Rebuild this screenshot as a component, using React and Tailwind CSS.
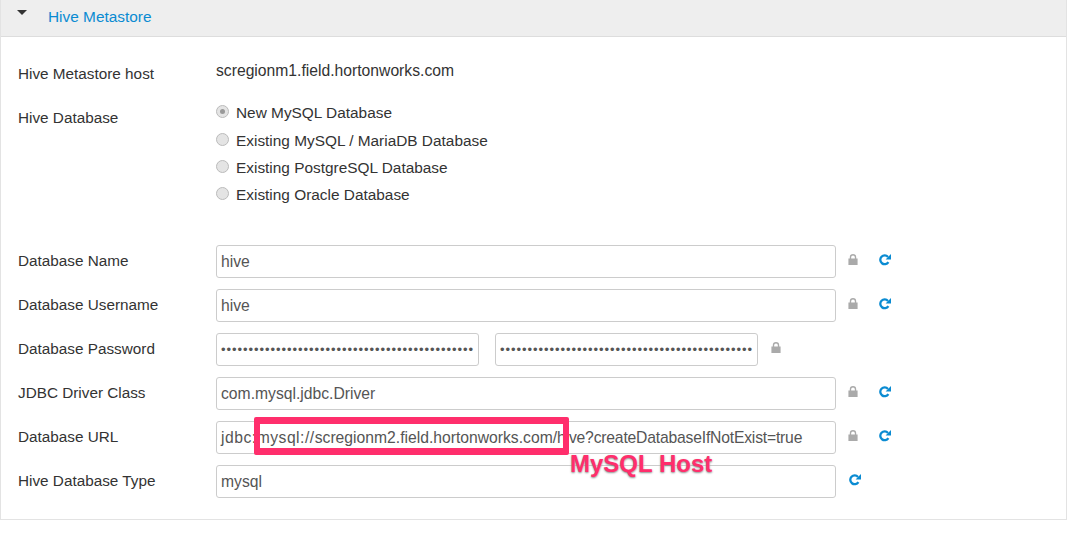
import { useId } from "react";

const font = { fontFamily: '"Liberation Sans", Arial, sans-serif' };
const dots = "\u2022".repeat(46);

const radios = [
  "New MySQL Database",
  "Existing MySQL / MariaDB Database",
  "Existing PostgreSQL Database",
  "Existing Oracle Database",
];

const LockIcon = () => (
  <svg viewBox="0 0 10 12" className="h-[11px] w-[10px] text-[#aaaaaa]" fill="currentColor">
    <path d="M1.5 5V3.5a3.5 3.5 0 0 1 7 0V5H10v7H0V5zM3 5h4V3.5a2 2 0 0 0-4 0z" />
  </svg>
);

const Refresh = () => (
  <svg viewBox="0 0 12 12" className="block h-[12px] w-[12px] text-[#0a8bd2]" fill="none">
    <path d="M9.4 8.2A4.4 4.4 0 1 1 9 2.9" stroke="currentColor" strokeWidth="2.3" />
    <path d="M12 0v5.4H6.6z" fill="currentColor" />
  </svg>
);

const Field = ({ children, className = "w-[620px] text-[15.7px]" }) => (
  <div className={`flex h-[33px] items-center rounded-[3px] border border-[#cccccc] bg-white pl-1 text-[#555555] ${className}`}>
    <span className="whitespace-nowrap">{children}</span>
  </div>
);

const Row = ({ label, children }) => {
  const id = useId();
  return (
    <div className="flex h-[33px] items-center">
      <label htmlFor={id} className="w-[215px] pt-[1px] pl-[17px] text-[15.3px] text-[#333333]">{label}</label>
      {children}
    </div>
  );
};

const Actions = ({ lock = true }) => (
  <div className="mt-[-3px] flex items-center">
    {lock ? (
      <span className="ml-[12px] flex w-[10px] justify-center"><LockIcon /></span>
    ) : null}
    <span className={lock ? "ml-[21px]" : "ml-[13px]"}><Refresh /></span>
  </div>
);

export default function App() {
  return (
    <div className="min-h-[538px] bg-white" style={font}>
      <div className="w-[1067px] border-r border-b border-l border-[#e3e3e3] pb-[21px]">
        <div className="flex h-[37px] items-center border-b border-[#dddddd] bg-[#eeeeee]">
          <span className="mt-[-11px] ml-[16px] h-0 w-0 border-x-[5px] border-t-[5px] border-x-transparent border-t-[#333333]" />
          <span className="mt-[-3px] ml-[21px] text-[15.4px] text-[#0a8bd2]">Hive Metastore</span>
        </div>

        <div className="flex pt-[22px] text-[#333333]">
          <div className="w-[215px] pt-[4px] pl-[17px] text-[15.3px]">Hive Metastore host</div>
          <div className="text-[15.7px]">scregionm1.field.hortonworks.com</div>
        </div>

        <div className="flex pt-[11px] text-[15.4px] text-[#333333]">
          <div className="w-[215px] pt-[10px] pl-[17px] text-[15.3px]">Hive Database</div>
          <div className="flex flex-col gap-[11.3px] pt-[8px]">
            {radios.map((item, i) => (
              <div key={item} className="flex h-[16px] items-center">
                <span className="mt-[-2px] flex h-[13px] w-[13px] items-center justify-center rounded-full border border-[#bbbbbb] bg-[#e4e4e4]">
                  {i === 0 ? <span className="h-[5px] w-[5px] rounded-full bg-[#999999]" /> : null}
                </span>
                <span className="ml-[7px]">{item}</span>
              </div>
            ))}
          </div>
        </div>

        <div className="mt-[42px] flex flex-col gap-[11px]">
          <Row label="Database Name">
            <Field>hive</Field>
            <Actions />
          </Row>
          <Row label="Database Username">
            <Field>hive</Field>
            <Actions />
          </Row>
          <Row label="Database Password">
            <Field className="w-[263px] overflow-hidden text-[13px] tracking-[0.95px]">{dots}</Field>
            <Field className="ml-[16px] w-[263px] overflow-hidden text-[13px] tracking-[0.95px]">{dots}</Field>
            <span className="mt-[-3px] ml-[13px] flex w-[10px] justify-center"><LockIcon /></span>
          </Row>
          <Row label="JDBC Driver Class">
            <Field>com.mysql.jdbc.Driver</Field>
            <Actions />
          </Row>
          <Row label="Database URL">
            <div className="relative">
              <Field>
                <span className="tracking-[0.5px]">jdbc:mysql://</span>
                scregionm2.field.hortonworks.com/
                <span className="tracking-[-0.19px]">hive?createDatabaseIfNotExist=true</span>
              </Field>
              <div className="absolute top-[-4px] left-[38px] h-[38px] w-[315px] rounded-[2px] border-x-[6px] border-y-[7px] border-[#ff2e6c]" />
              <div className="absolute top-[29px] left-[354px] text-[24px] leading-[28px] font-bold whitespace-nowrap text-[#ff2e6c] [text-shadow:0_1px_2px_rgba(0,0,0,0.45),0_0_2px_white]">
                MySQL Host
              </div>
            </div>
            <Actions />
          </Row>
          <Row label="Hive Database Type">
            <Field>mysql</Field>
            <Actions lock={false} />
          </Row>
        </div>
      </div>
    </div>
  );
}
